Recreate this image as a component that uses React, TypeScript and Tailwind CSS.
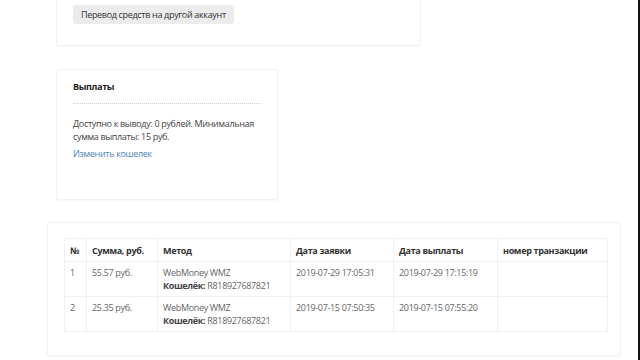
const rows = [
  {
    n: 1,
    sum: "55.57 руб.",
    method: "WebMoney WMZ",
    wallet: "R818927687821",
    created: "2019-07-29 17:05:31",
    paid: "2019-07-29 17:15:19",
  },
  {
    n: 2,
    sum: "25.35 руб.",
    method: "WebMoney WMZ",
    wallet: "R818927687821",
    created: "2019-07-15 07:50:35",
    paid: "2019-07-15 07:55:20",
  },
];

const cardCls =
  "bg-white border border-[#f1f1f1] rounded-[3px] shadow-[0_1px_2px_rgba(0,0,0,0.04)]";

export default function App() {
  return (
    <div
      className="flex w-[640px] h-[360px] overflow-hidden bg-white text-[9px] leading-[13px] tracking-[-0.33px] text-[#333]"
      style={{ fontFamily: '"Open Sans", "Noto Sans", sans-serif' }}
    >
      <div className="flex-1 flex flex-col">
        {/* Transfer card (cut off at the top) */}
        <div className={`${cardCls} ml-[56px] w-[365px] -mt-[20px] pt-[25px] pb-[21px] px-4 border-t-0`}>
          <button className="h-[19px] px-2 rounded-[3px] bg-[#ececec] text-[9px] tracking-[-0.33px] text-[#333]">
            Перевод средств на другой аккаунт
          </button>
        </div>

        {/* Payouts */}
        <div className={`${cardCls} ml-[56px] mt-[23px] w-[222px] h-[131px] px-4 pt-[10px]`}>
          <div className="font-bold text-[#222] h-[13px]">Выплаты</div>
          <div className="mt-[10px] border-t border-dotted border-[#cfcfcf]" />
          <p className="mt-[13px] text-[#444]">
            Доступно к выводу: 0 рублей. Минимальная сумма выплаты: 15 руб.
          </p>
          <a className="block mt-[4px] text-[#4a86b8]">Изменить кошелек</a>
        </div>

        {/* History table */}
        <div className={`${cardCls} ml-[47px] mt-[22px] w-[574px] h-[134px] pl-[16px] pt-[15px]`}>
          <table className="border-collapse table-fixed w-[543px]">
            <colgroup>
              <col className="w-[22px]" />
              <col className="w-[71px]" />
              <col className="w-[133px]" />
              <col className="w-[103px]" />
              <col className="w-[104px]" />
              <col className="w-[110px]" />
            </colgroup>
            <thead>
              <tr className="h-[23px]">
                {["№", "Сумма, руб.", "Метод", "Дата заявки", "Дата выплаты", "номер транзакции"].map((h) => (
                  <th
                    key={h}
                    className="border border-[#f0f0f0] px-[5px] text-left font-bold text-[#333] whitespace-nowrap"
                  >
                    {h}
                  </th>
                ))}
              </tr>
            </thead>
            <tbody className="text-[#666]">
              {rows.map((r) => (
                <tr key={r.n} className="h-[35px] align-top">
                  <td className="border border-[#f0f0f0] px-[5px] pt-[4px]">{r.n}</td>
                  <td className="border border-[#f0f0f0] px-[5px] pt-[4px] whitespace-nowrap">{r.sum}</td>
                  <td className="border border-[#f0f0f0] px-[5px] pt-[4px] whitespace-nowrap">
                    <div>{r.method}</div>
                    <div>
                      <span className="font-bold text-[#444]">Кошелёк:</span> {r.wallet}
                    </div>
                  </td>
                  <td className="border border-[#f0f0f0] px-[5px] pt-[4px] whitespace-nowrap">{r.created}</td>
                  <td className="border border-[#f0f0f0] px-[5px] pt-[4px] whitespace-nowrap">{r.paid}</td>
                  <td className="border border-[#f0f0f0] px-[5px] pt-[4px]" />
                </tr>
              ))}
            </tbody>
          </table>
        </div>
      </div>
      <div className="w-[2px] h-full bg-[#111]" />
    </div>
  );
}
